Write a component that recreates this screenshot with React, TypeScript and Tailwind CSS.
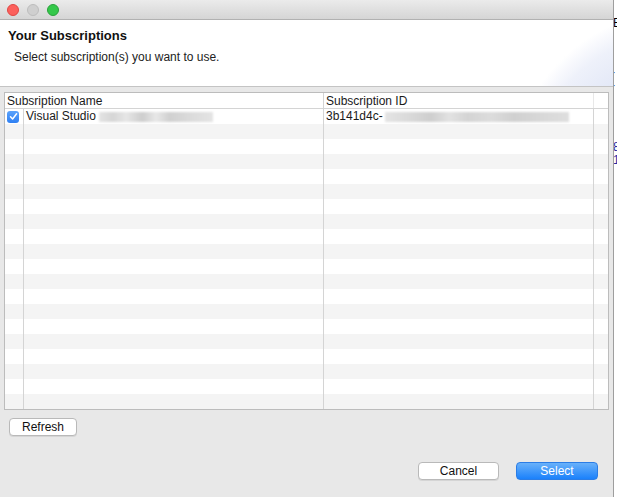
import React from "react";

const ROWS = 20;

function Check() {
  return (
    <div className="w-[12px] h-[12px] rounded-[3px] bg-[linear-gradient(#5aa2fb,#2f80f3)] flex items-center justify-center">
      <svg width="9" height="9" viewBox="0 0 9 9">
        <path d="M1.5 4.8 L3.6 7 L7.6 1.8" fill="none" stroke="white" strokeWidth="1.5" strokeLinecap="round" strokeLinejoin="round" />
      </svg>
    </div>
  );
}

export default function App() {
  const rows = Array.from({ length: ROWS }, (_, i) => i);
  return (
    <div
      className="w-[617px] h-[497px] flex bg-white overflow-hidden text-[#1a1a1a]"
      style={{ fontFamily: '"Liberation Sans", Arial, sans-serif' }}
    >
      {/* window */}
      <div className="w-[614px] h-[497px] flex flex-col border-r border-[#9e9e9e] shrink-0">
        {/* title bar */}
        <div className="h-[20px] shrink-0 bg-[linear-gradient(#ebebeb,#d5d5d5)] border-b border-[#b1b1b1] flex items-center pl-[7px] gap-[8px]">
          <div className="w-[12px] h-[12px] rounded-full bg-[#fc605c] border border-[#df4744]" />
          <div className="w-[12px] h-[12px] rounded-full bg-[#cfcfcf] border border-[#bdbdbd]" />
          <div className="w-[12px] h-[12px] rounded-full bg-[#34c84a] border border-[#2aa13b]" />
        </div>
        {/* header */}
        <div className="h-[67px] shrink-0 border-b border-[#c4c4c4] bg-[radial-gradient(circle_at_682px_162px,#d9e0f3_0px,#e4e9f7_120px,#eef1fa_150px,#f8f9fd_163px,#ffffff_172px)] flex flex-col">
          <div className="pl-[8px] pt-[8px] text-[13px] font-bold leading-[16px] text-[#111]">Your Subscriptions</div>
          <div className="pl-[14px] pt-[6px] text-[12px] leading-[15px] text-[#222]">Select subscription(s) you want to use.</div>
        </div>
        {/* body */}
        <div className="flex-1 bg-[#e8e8e8] flex flex-col pl-[4px] pt-[5px]">
          <div className="w-[605px] border border-[#bcbcbc] bg-white flex flex-col text-[12px]">
            {/* header row */}
            <div className="h-[16px] flex border-b border-[#d4d4d4] leading-[16px]">
              <div className="w-[319px] border-r border-[#d4d4d4] pl-[2px]">Subsription Name</div>
              <div className="w-[270px] border-r border-[#e8e8e8] pl-[2px]">Subscription ID</div>
              <div className="flex-1" />
            </div>
            {rows.map((i) => (
              <div
                key={i}
                className={`h-[15px] flex leading-[15px] ${i % 2 === 1 ? "bg-[#f4f4f4]" : "bg-white"}`}
              >
                <div className="w-[19px] border-r border-[#d4d4d4] flex items-center pl-[2px]">
                  {i === 0 && <Check />}
                </div>
                <div className="w-[300px] border-r border-[#d4d4d4] pl-[2px] flex items-center">
                  {i === 0 && (
                    <>
                      <span>Visual Studio</span>
                      <span className="ml-[3px] w-[114px] h-[10px] blur-[1px] bg-[linear-gradient(90deg,#e4e4e4_0%,#d6d6d6_12%,#e6e6e6_24%,#cdcdcd_38%,#e8e8e8_50%,#d0d0d0_62%,#dadada_78%,#e4e4e4_100%)]" />
                    </>
                  )}
                </div>
                <div className="w-[270px] border-r border-[#d4d4d4] pl-[2px] flex items-center">
                  {i === 0 && (
                    <>
                      <span>3b141d4c-</span>
                      <span className="ml-[2px] w-[184px] h-[10px] blur-[1px] bg-[linear-gradient(90deg,#e4e4e4_0%,#d8d8d8_15%,#cecece_25%,#e2e2e2_35%,#d4d4d4_45%,#dcdcdc_58%,#d0d0d0_70%,#d8d8d8_85%,#dedede_100%)]" />
                    </>
                  )}
                </div>
                <div className="flex-1" />
              </div>
            ))}
          </div>
          <div className="mt-[8px] ml-[5px] flex">
            <button className="w-[68px] h-[18px] rounded-[4px] bg-white border border-[#b9b9b9] shadow-[0_1px_0_rgba(0,0,0,0.08)] text-[12px] leading-[16px] text-[#111]">
              Refresh
            </button>
          </div>
          <div className="mt-[26px] flex justify-end pr-[15px] gap-[17px]">
            <button className="w-[81px] h-[18px] rounded-[4px] bg-white border border-[#b9b9b9] shadow-[0_1px_0_rgba(0,0,0,0.08)] text-[12px] leading-[16px] text-[#111]">
              Cancel
            </button>
            <button className="w-[82px] h-[18px] rounded-[4px] bg-[linear-gradient(#69b1fa,#1b81fb)] border border-[#2b7de6] text-[12px] leading-[16px] text-white">
              Select
            </button>
          </div>
        </div>
      </div>
      {/* background window sliver */}
      <div className="flex-1 overflow-hidden flex flex-col text-[12px] leading-[13px] text-black bg-white">
        <div className="h-[4px]" />
        <span className="-ml-[4px]">t</span>
        <span className="-ml-[1px]">E</span>
        <span className="-ml-[4px]">t</span>
        <span className="-ml-[4px]">t</span>
        <div className="h-[10px]" />
        <span className="-ml-[3px] text-[#2a2aa0]">-</span>
        <span className="-ml-[3px] text-[#2a2aa0]">-</span>
        <span className="-ml-[4px]">t</span>
        <div className="h-[36px]" />
        <span className="-ml-[1px] text-[#2a2aa0]">8</span>
        <span className="-ml-[1px] text-[#2a2aa0]">1</span>
      </div>
    </div>
  );
}
